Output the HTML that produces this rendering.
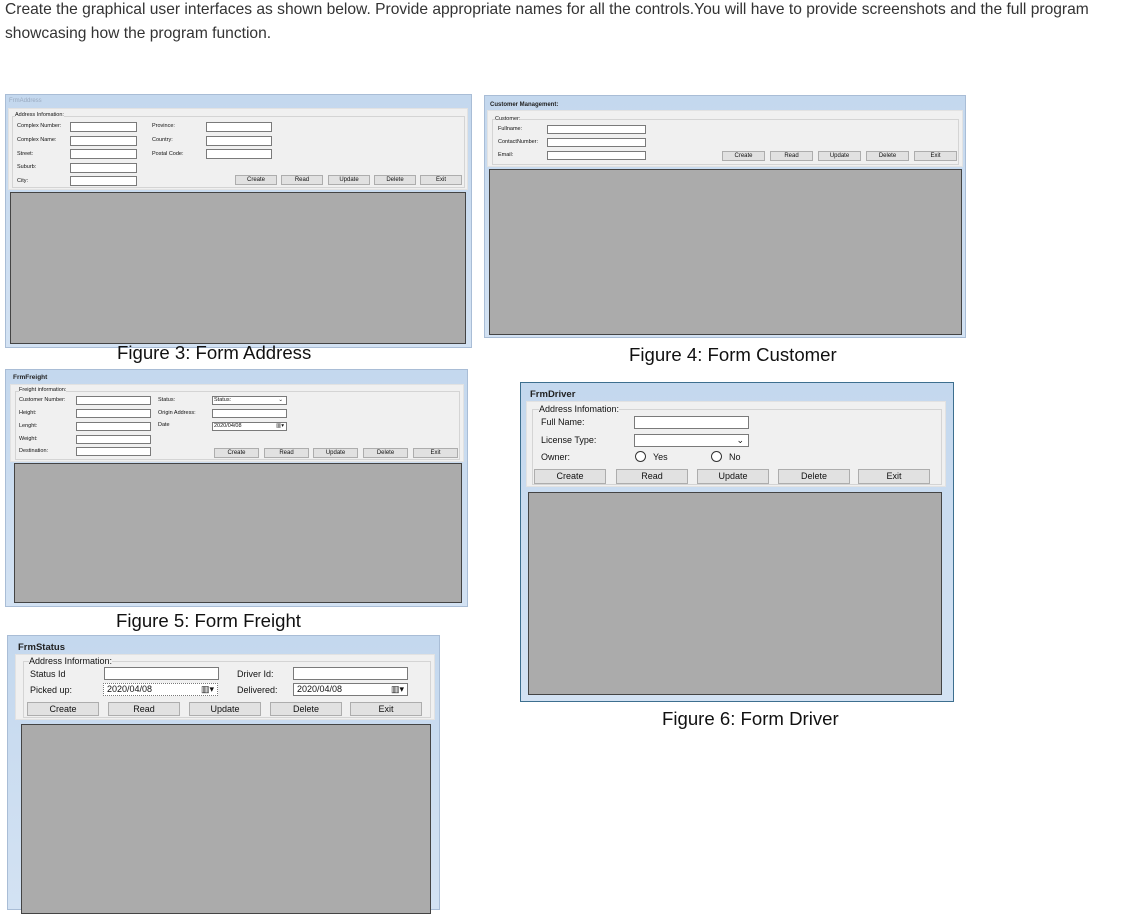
<!DOCTYPE html>
<html><head><meta charset="utf-8"><style>
*{margin:0;padding:0;box-sizing:border-box}
body{width:1122px;height:904px;background:#fff;position:relative;overflow:hidden;font-family:"Liberation Sans",sans-serif}
div,span{position:absolute}
.t{color:#333;font-size:15.6px;left:5px;white-space:nowrap}
.w{background:linear-gradient(#c4d8ee,#d3e2f3);border:1px solid #a9bdd6}
.wt{font-size:8px;color:#222;font-weight:bold}
.p{background:#f0f0f0;border:1px solid #e2e2e2}
.gb{border:1px solid #d4d4d4}
.g{background:#ababab;border:1px solid #444}
.i{background:#fff;border:1px solid #7a7a7a}
.b{background:#e1e1e1;border:1px solid #adadad;font-size:6px;color:#111;text-align:center}
.l{font-size:5.5px;color:#111;white-space:nowrap}
.cap{font-size:18.6px;color:#111;white-space:nowrap}
.m .l{font-size:9px}.m .b{font-size:9px;line-height:13px}.m .wt{font-size:9.5px}
.r{width:11px;height:11px;border:1px solid #333;border-radius:50%;background:#fff}
</style></head><body>
<div class="t" style="top:1px">Create the graphical user interfaces as shown below. Provide appropriate names for all the controls.You will have to provide screenshots and the full program</div>
<div class="t" style="top:25px">showcasing how the program function.</div>

<!-- Form Address -->
<div class="w" style="left:5px;top:94px;width:467px;height:254px"></div>
<div class="wt" style="left:9px;top:98px;color:#9aaac0;font-weight:normal;font-size:6px">FrmAddress</div>
<div class="p" style="left:8px;top:108px;width:460px;height:82px"></div>
<div class="gb" style="left:12px;top:116px;width:453px;height:72px"></div>
<div class="l" style="left:15px;top:112px;background:#f0f0f0">Address Infomation:</div>
<div class="l" style="left:17px;top:123px">Complex Number:</div>
<div class="l" style="left:17px;top:137px">Complex Name:</div>
<div class="l" style="left:17px;top:151px">Street:</div>
<div class="l" style="left:17px;top:164px">Suburb:</div>
<div class="l" style="left:17px;top:178px">City:</div>
<div class="i" style="left:70px;top:122px;width:67px;height:10px"></div>
<div class="i" style="left:70px;top:136px;width:67px;height:10px"></div>
<div class="i" style="left:70px;top:149px;width:67px;height:10px"></div>
<div class="i" style="left:70px;top:163px;width:67px;height:10px"></div>
<div class="i" style="left:70px;top:176px;width:67px;height:10px"></div>
<div class="l" style="left:152px;top:123px">Province:</div>
<div class="l" style="left:152px;top:137px">Country:</div>
<div class="l" style="left:152px;top:151px">Postal Code:</div>
<div class="i" style="left:206px;top:122px;width:66px;height:10px"></div>
<div class="i" style="left:206px;top:136px;width:66px;height:10px"></div>
<div class="i" style="left:206px;top:149px;width:66px;height:10px"></div>
<div class="b" style="left:235px;top:175px;width:42px;height:10px;line-height:8px">Create</div>
<div class="b" style="left:281px;top:175px;width:42px;height:10px;line-height:8px">Read</div>
<div class="b" style="left:328px;top:175px;width:42px;height:10px;line-height:8px">Update</div>
<div class="b" style="left:374px;top:175px;width:42px;height:10px;line-height:8px">Delete</div>
<div class="b" style="left:420px;top:175px;width:42px;height:10px;line-height:8px">Exit</div>
<div class="g" style="left:10px;top:192px;width:456px;height:152px"></div>
<div class="cap" style="left:117px;top:342px">Figure 3: Form Address</div>

<!-- Form Customer -->
<div class="w" style="left:484px;top:95px;width:482px;height:243px"></div>
<div class="wt" style="left:490px;top:102px;font-size:6px">Customer Management:</div>
<div class="p" style="left:487px;top:110px;width:476px;height:57px"></div>
<div class="gb" style="left:492px;top:119px;width:467px;height:46px"></div>
<div class="l" style="left:495px;top:116px;background:#f0f0f0">Customer:</div>
<div class="l" style="left:498px;top:126px">Fullname:</div>
<div class="l" style="left:498px;top:139px">ContactNumber:</div>
<div class="l" style="left:498px;top:152px">Email:</div>
<div class="i" style="left:547px;top:125px;width:99px;height:9px"></div>
<div class="i" style="left:547px;top:138px;width:99px;height:9px"></div>
<div class="i" style="left:547px;top:151px;width:99px;height:9px"></div>
<div class="b" style="left:722px;top:151px;width:43px;height:10px;line-height:8px">Create</div>
<div class="b" style="left:770px;top:151px;width:43px;height:10px;line-height:8px">Read</div>
<div class="b" style="left:818px;top:151px;width:43px;height:10px;line-height:8px">Update</div>
<div class="b" style="left:866px;top:151px;width:43px;height:10px;line-height:8px">Delete</div>
<div class="b" style="left:914px;top:151px;width:43px;height:10px;line-height:8px">Exit</div>
<div class="g" style="left:489px;top:169px;width:473px;height:166px"></div>
<div class="cap" style="left:629px;top:344px">Figure 4: Form Customer</div>

<!-- Form Freight -->
<div class="w" style="left:5px;top:369px;width:463px;height:238px"></div>
<div class="wt" style="left:13px;top:374px;font-size:6.5px">FrmFreight</div>
<div class="p" style="left:10px;top:384px;width:454px;height:78px"></div>
<div class="gb" style="left:15px;top:391px;width:445px;height:69px"></div>
<div class="l" style="left:19px;top:387px;background:#f0f0f0">Freight information:</div>
<div class="l" style="left:19px;top:397px">Customer Number:</div>
<div class="l" style="left:19px;top:410px">Height:</div>
<div class="l" style="left:19px;top:423px">Lenght:</div>
<div class="l" style="left:19px;top:436px">Weight:</div>
<div class="l" style="left:19px;top:448px">Destination:</div>
<div class="i" style="left:76px;top:396px;width:75px;height:9px"></div>
<div class="i" style="left:76px;top:409px;width:75px;height:9px"></div>
<div class="i" style="left:76px;top:422px;width:75px;height:9px"></div>
<div class="i" style="left:76px;top:435px;width:75px;height:9px"></div>
<div class="i" style="left:76px;top:447px;width:75px;height:9px"></div>
<div class="l" style="left:158px;top:397px">Status:</div>
<div class="l" style="left:158px;top:410px">Origin Address:</div>
<div class="l" style="left:158px;top:422px">Date</div>
<div class="i l" style="left:212px;top:396px;width:75px;height:9px;line-height:7px;padding-left:1px">Status:<span style="right:3px;top:0">⌄</span></div>
<div class="i" style="left:212px;top:409px;width:75px;height:9px"></div>
<div class="i l" style="left:212px;top:422px;width:75px;height:9px;line-height:7px;padding-left:1px">2020/04/08<span style="right:2px;top:0">▥▾</span></div>
<div class="b" style="left:214px;top:448px;width:45px;height:10px;line-height:8px">Create</div>
<div class="b" style="left:264px;top:448px;width:45px;height:10px;line-height:8px">Read</div>
<div class="b" style="left:313px;top:448px;width:45px;height:10px;line-height:8px">Update</div>
<div class="b" style="left:363px;top:448px;width:45px;height:10px;line-height:8px">Delete</div>
<div class="b" style="left:413px;top:448px;width:45px;height:10px;line-height:8px">Exit</div>
<div class="g" style="left:14px;top:463px;width:448px;height:140px"></div>
<div class="cap" style="left:116px;top:610px">Figure 5: Form Freight</div>

<!-- Form Driver -->
<div class="m">
<div class="w" style="left:520px;top:382px;width:434px;height:320px;border-color:#3d6f8f"></div>
<div class="wt" style="left:530px;top:389px">FrmDriver</div>
<div class="p" style="left:526px;top:401px;width:420px;height:86px"></div>
<div class="gb" style="left:532px;top:409px;width:410px;height:76px"></div>
<div class="l" style="left:539px;top:404px;background:#f0f0f0">Address Infomation:</div>
<div class="l" style="left:541px;top:417px">Full Name:</div>
<div class="l" style="left:541px;top:435px">License Type:</div>
<div class="l" style="left:541px;top:452px">Owner:</div>
<div class="i" style="left:634px;top:416px;width:115px;height:13px"></div>
<div class="i l" style="left:634px;top:434px;width:115px;height:13px"><span style="right:4px;top:0">⌄</span></div>
<div class="r" style="left:635px;top:451px"></div><div class="l" style="left:653px;top:452px">Yes</div>
<div class="r" style="left:711px;top:451px"></div><div class="l" style="left:729px;top:452px">No</div>
<div class="b" style="left:534px;top:469px;width:72px;height:15px">Create</div>
<div class="b" style="left:616px;top:469px;width:72px;height:15px">Read</div>
<div class="b" style="left:697px;top:469px;width:72px;height:15px">Update</div>
<div class="b" style="left:778px;top:469px;width:72px;height:15px">Delete</div>
<div class="b" style="left:858px;top:469px;width:72px;height:15px">Exit</div>
<div class="g" style="left:528px;top:492px;width:414px;height:203px"></div>
</div>
<div class="cap" style="left:662px;top:708px">Figure 6: Form Driver</div>

<!-- Form Status -->
<div class="m">
<div class="w" style="left:7px;top:635px;width:433px;height:275px"></div>
<div class="wt" style="left:18px;top:642px">FrmStatus</div>
<div class="p" style="left:15px;top:654px;width:420px;height:66px"></div>
<div class="gb" style="left:23px;top:661px;width:408px;height:57px"></div>
<div class="l" style="left:29px;top:656px;background:#f0f0f0">Address Information:</div>
<div class="l" style="left:30px;top:669px">Status Id</div>
<div class="l" style="left:30px;top:685px">Picked up:</div>
<div class="i" style="left:104px;top:667px;width:115px;height:13px"></div>
<div class="i l" style="left:103px;top:683px;width:115px;height:13px;border-style:dotted;line-height:11px;padding-left:3px">2020/04/08<span style="right:3px;top:0">▥▾</span></div>
<div class="l" style="left:237px;top:669px">Driver Id:</div>
<div class="l" style="left:237px;top:685px">Delivered:</div>
<div class="i" style="left:293px;top:667px;width:115px;height:13px"></div>
<div class="i l" style="left:293px;top:683px;width:115px;height:13px;line-height:11px;padding-left:3px">2020/04/08<span style="right:3px;top:0">▥▾</span></div>
<div class="b" style="left:27px;top:702px;width:72px;height:14px">Create</div>
<div class="b" style="left:108px;top:702px;width:72px;height:14px">Read</div>
<div class="b" style="left:189px;top:702px;width:72px;height:14px">Update</div>
<div class="b" style="left:270px;top:702px;width:72px;height:14px">Delete</div>
<div class="b" style="left:350px;top:702px;width:72px;height:14px">Exit</div>
<div class="g" style="left:21px;top:724px;width:410px;height:190px"></div>
</div>
</body></html>
